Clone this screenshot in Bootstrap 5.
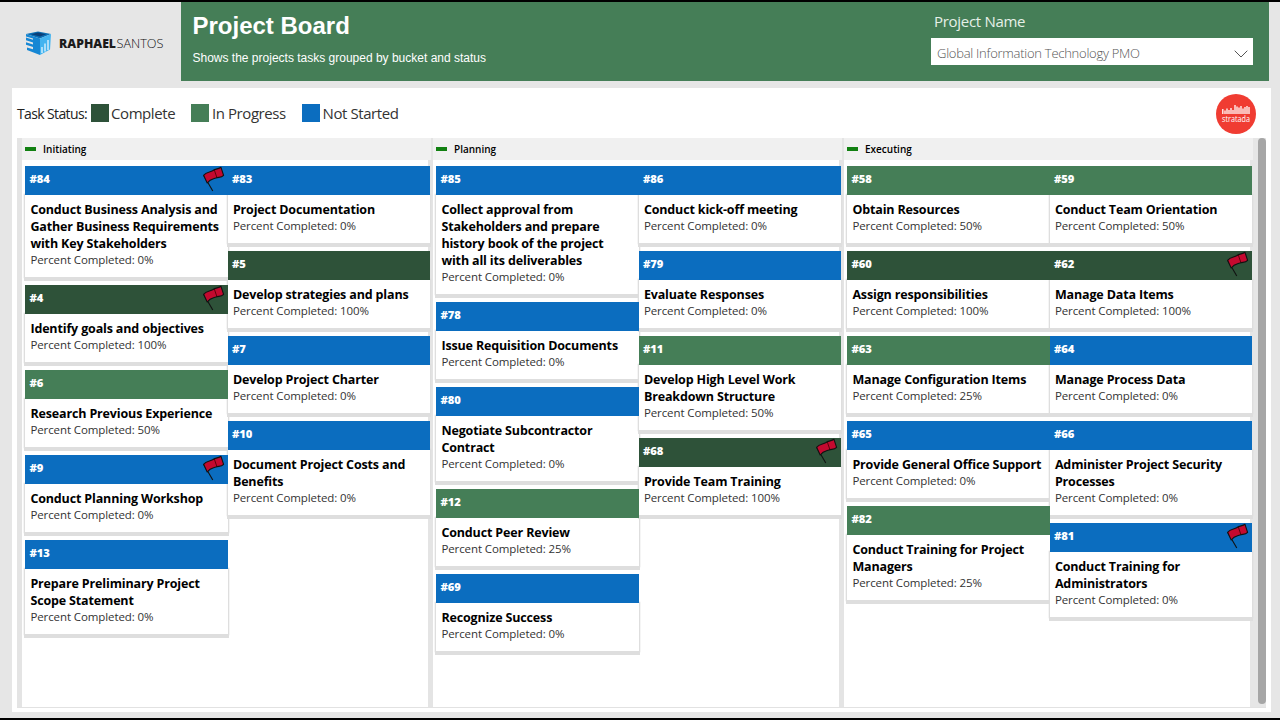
<!DOCTYPE html>
<html lang="en">
<head>
<meta charset="utf-8">
<meta name="viewport" content="width=device-width, initial-scale=1">
<title>Project Board</title>
<link href="https://cdn.jsdelivr.net/npm/bootstrap@5.3.0/dist/css/bootstrap.min.css" rel="stylesheet">
<style>
  :root { --done: #2e5239; --doing: #457e57; --todo: #0b6dbf; --line: #dedede; }
  body { width: 1280px; height: 720px; background: #e6e6e6; border-top: 2px solid #000; border-bottom: 2px solid #000; font-family: "Open Sans", "Noto Sans", sans-serif; color: #000; }
  .top-bar { height: 78px; }
  .brand-box { width: 181px; }
  .banner { width: 1088px; height: 78.5px; background: #457e57; font-family: "Liberation Sans", Arial, sans-serif; padding: 9px 16px 0 11.5px; }
  .banner h1 { font-size: 24px; line-height: 30px; font-weight: 700; }
  .banner .sub-line { font-size: 12px; line-height: 16px; margin-top: 9px; }
  .slicer { width: 322px; font-family: "Open Sans", sans-serif; font-weight: 300; }
  .slicer-label { font-size: 15px; line-height: 20px; padding-left: 3px; letter-spacing: -.3px; font-weight: 400; color: #e6f0e8; }
  .slicer-box { height: 27px; background: #fff; color: #555; font-size: 13px; padding: 4px 5px 0 6px; margin-top: 7px; letter-spacing: -.26px; }
  .panel { margin: 8px 9px 0 12px; height: 624px; background: #fff; padding: 0 5px; }
  .legend-row { height: 50px; }
  .legend-row .cap { width: 73.5px; font-size: 14px; letter-spacing: -.63px; color: #222; white-space: nowrap; }
  .legend-row .item { font-size: 15px; color: #333; letter-spacing: -.42px; margin-right: 16.3px; }
  .swatch { width: 18px; height: 18px; margin-right: 2.5px; }
  .board { height: 570px; border-bottom: 1px solid #e2e2e2; }
  .lane { width: 411px; border-left: 5px solid #e4e4e4; }
  .lane-head { height: 22px; margin-right: -2.5px; background: #f0f0f0; font-size: 10px; font-weight: 600; padding: 1px 0 0 3px; position: relative; }
  .dash { width: 11px; height: 4px; background: #118011; margin: -1px 7px 0 0; }
  .stacks { padding: 6px 0 0 3.4px; }
  .stack { width: 202.5px; flex: none; position: relative; }
  .task { margin-bottom: 8px; }
  .task-body { padding-bottom: 9px; background: #fff; box-shadow: 0 0 0 1.3px var(--line), 0 3px 0 1px var(--line); }
  .task-head { height: 29px; color: #fff; font-size: 11.2px; font-weight: 800; padding: 0 3px 3px 4px; position: relative; z-index: 1; }
  .done { background: var(--done); } .doing { background: var(--doing); } .todo { background: var(--todo); }
  .flag { position: absolute; right: 3px; top: 0; width: 24px; height: 26px; }
  .task-name { font-size: 12.5px; line-height: 17px; font-weight: 700; letter-spacing: -.15px; padding: 6px 0 0 5px; white-space: nowrap; }
  .task-pct { font-size: 11.5px; line-height: 16px; height: 16px; padding-left: 5px; color: #333; letter-spacing: -.1px; }
  .rail { width: 15.5px; background: #e6e6e6; }
  .thumb { width: 8px; height: 566px; background: #a6a6a6; border-radius: 4px; margin-left: 7.5px; }
</style>
</head>
<body class="overflow-hidden">
<svg width="0" height="0" class="position-absolute">
  <symbol id="flag" viewBox="0 0 24 26">
    <path d="M2.600 9.300 11.800 25" fill="none" stroke="#111" stroke-width="1.100"/>
    <path d="M2.600 9.300C5.500 5.500 9 6.500 12 4.500C14.500 2.400 17.500 3.300 20 1.300L22.600 9.300C20 12.300 17.500 10.700 14.800 12C11.500 13 9 13 6.200 17Z" fill="#c4092f" stroke="#111" stroke-width="1.100" stroke-linejoin="round"/>
    <path d="M13.300 4 15.900 11.600" stroke="#400" stroke-width=".8"/>
  </symbol>
</svg>

<header class="top-bar d-flex">
  <div class="brand-box">
    <svg width="181" height="78" viewBox="0 2 181 78">
      <path d="M26 34 38 31.5 51 34 40 38.500Z" fill="#0a6fb5"/>
      <path d="M31 34.200 38 32.600 46 34.200 40 36.500Z" fill="#0b3f78"/>
      <path d="M40 38.500 51 34 50 49.500 40 55Z" fill="#43b4f0"/>
      <path d="M26 34 40 38.500 40 55 27 50 27 47.500 33 49.200 33 47 26 44.800 26 42.300 33 44.500 33 42.400 26 40.200 26 37.500 33 39.800 33 38.500 26 36.500Z" fill="#1687d4"/>
      <path d="M42 53V47M45 51.500V43.500M48 50V40" stroke="#e6f4fc" stroke-width="1.300"/>
      <text x="59" y="48" font-size="13" font-weight="800" fill="#1b1b1b" textLength="57" lengthAdjust="spacingAndGlyphs" font-family="Open Sans">RAPHAEL</text>
      <text x="116.500" y="48" font-size="13" font-weight="300" fill="#111" textLength="47" lengthAdjust="spacingAndGlyphs" font-family="Open Sans">SANTOS</text>
    </svg>
  </div>
  <div class="banner d-flex justify-content-between">
    <div>
      <h1 class="m-0 text-white">Project Board</h1>
      <p class="sub-line mb-0 text-white">Shows the projects tasks grouped by bucket and status</p>
    </div>
    <div class="slicer">
      <div class="slicer-label">Project Name</div>
      <div class="slicer-box d-flex align-items-center justify-content-between">
        <span>Global Information Technology PMO</span>
        <svg width="14" height="8" viewBox="0 0 14 8"><path d="M.7.7 7 7 13.300.7" fill="none" stroke="#555" stroke-width="1"/></svg>
      </div>
    </div>
  </div>
</header>

<main class="panel">
  <div class="legend-row d-flex align-items-center">
    <span class="cap">Task Status:</span>
    <span class="item d-flex align-items-center"><i class="swatch done"></i>Complete</span>
    <span class="item d-flex align-items-center"><i class="swatch doing"></i>In Progress</span>
    <span class="item d-flex align-items-center"><i class="swatch todo"></i>Not Started</span>
    <svg class="ms-auto" width="50" height="42" viewBox="0 0 50 42">
      <circle cx="20" cy="22" r="20" fill="#f03c32"/>
      <path d="M6.800 17V22M9 18.500V22M11 16.500V22M13 18V22M15 16V22M17 18V22M19 13V22M21 14.500V22M23 15.500V22M25 14V22M27 16.500V22M29 15V22M31 14V22M33 15V22" stroke="#fff" stroke-width="1.300"/>
      <text x="6" y="30" font-size="9" font-weight="400" fill="#fff" textLength="28" lengthAdjust="spacingAndGlyphs" font-family="Open Sans">stratada</text>
    </svg>
  </div>
  <div class="board d-flex" id="board"></div>
</main>

<script src="https://cdn.jsdelivr.net/npm/bootstrap@5.3.0/dist/js/bootstrap.bundle.min.js"></script>
<script>
  // Task: [number, status, title (| marks a line break), percent, flagged]
  const lanes = [
    ["Initiating", [
      [84, "todo", "Conduct Business Analysis and|Gather Business Requirements|with Key Stakeholders", 0, 1],
      [4, "done", "Identify goals and objectives", 100, 1],
      [6, "doing", "Research Previous Experience", 50],
      [9, "todo", "Conduct Planning Workshop", 0, 1],
      [13, "todo", "Prepare Preliminary Project|Scope Statement", 0]
    ], [
      [83, "todo", "Project Documentation", 0],
      [5, "done", "Develop strategies and plans", 100],
      [7, "todo", "Develop Project Charter", 0],
      [10, "todo", "Document Project Costs and|Benefits", 0]
    ]],
    ["Planning", [
      [85, "todo", "Collect approval from|Stakeholders and prepare|history book of the project|with all its deliverables", 0],
      [78, "todo", "Issue Requisition Documents", 0],
      [80, "todo", "Negotiate Subcontractor|Contract", 0],
      [12, "doing", "Conduct Peer Review", 25],
      [69, "todo", "Recognize Success", 0]
    ], [
      [86, "todo", "Conduct kick-off meeting", 0],
      [79, "todo", "Evaluate Responses", 0],
      [11, "doing", "Develop High Level Work|Breakdown Structure", 50],
      [68, "done", "Provide Team Training", 100, 1]
    ]],
    ["Executing", [
      [58, "doing", "Obtain Resources", 50],
      [60, "done", "Assign responsibilities", 100],
      [63, "doing", "Manage Configuration Items", 25],
      [65, "todo", "Provide General Office Support", 0],
      [82, "doing", "Conduct Training for Project|Managers", 25]
    ], [
      [59, "doing", "Conduct Team Orientation", 50],
      [62, "done", "Manage Data Items", 100, 1],
      [64, "todo", "Manage Process Data", 0],
      [66, "todo", "Administer Project Security|Processes", 0],
      [81, "todo", "Conduct Training for|Administrators", 0, 1]
    ]]
  ];
  const task = ([id, status, name, pct, flagged]) => `
    <article class="task">
      <div class="task-head ${status} d-flex align-items-center">#${id}${flagged ? '<svg class="flag"><use href="#flag"/></svg>' : ''}</div>
      <div class="task-body">
        <div class="task-name">${name.replace(/\|/g, "<br>")}</div>
        <div class="task-pct">Percent Completed: ${pct}%</div>
      </div>
    </article>`;
  document.getElementById("board").innerHTML = lanes.map(([title, left, right]) => `
    <section class="lane flex-shrink-0">
      <div class="lane-head d-flex align-items-center"><i class="dash"></i>${title}</div>
      <div class="stacks d-flex"><div class="stack">${left.map(task).join("")}</div><div class="stack">${right.map(task).join("")}</div></div>
    </section>`).join("") + '<div class="rail"><div class="thumb"></div></div>';
</script>
</body>
</html>
